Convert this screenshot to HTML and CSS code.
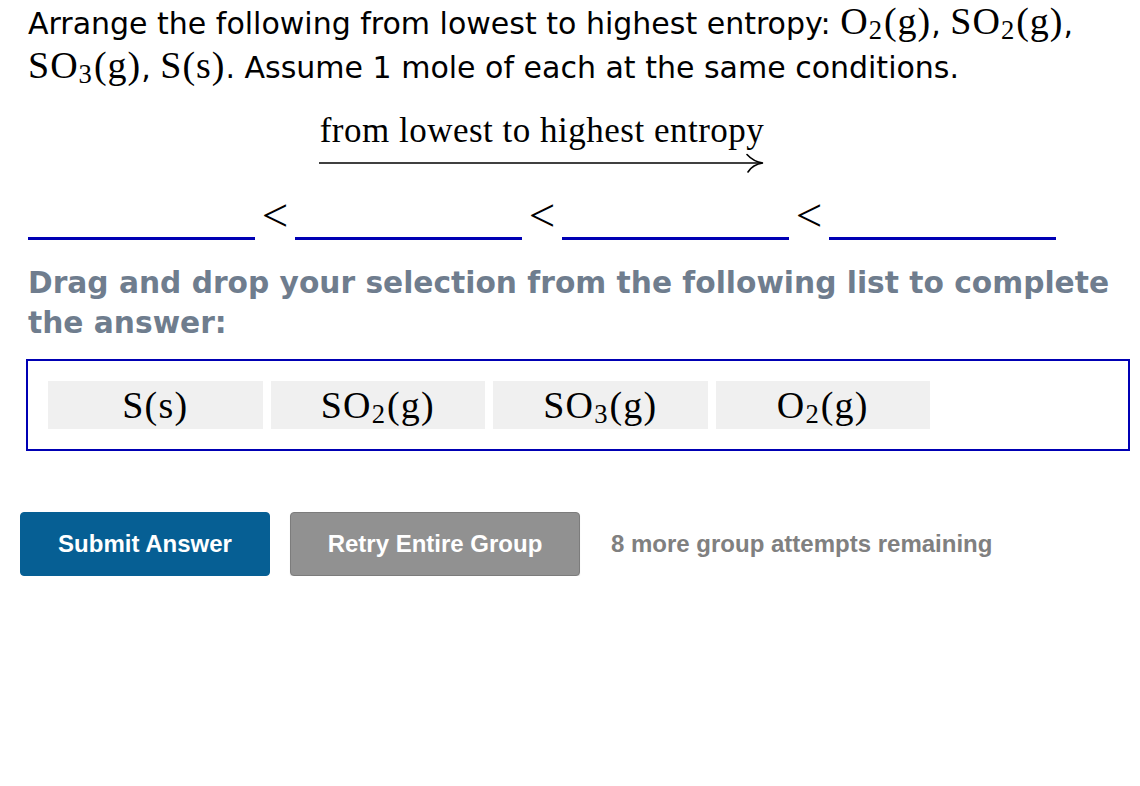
FILE: index.html
```html
<!DOCTYPE html>
<html lang="en">
<head>
<meta charset="utf-8">
<title>Entropy ordering</title>
<link rel="stylesheet" href="styles.css">
</head>
<body>
<main class="page">
  <p class="question">Arrange the following from lowest to highest entropy: <span class="m">O<sub>2</sub>(g)</span>, <span class="m">SO<sub>2</sub>(g)</span>, <span class="m">SO<sub>3</sub>(g)</span>, <span class="m">S(s)</span>. Assume 1 mole of each at the same conditions.</p>

  <div class="order">
    <div class="direction">
      <div class="direction-label">from lowest to highest entropy</div>
      <svg class="direction-arrow" width="446" height="20" viewBox="0 0 446 20">
        <path d="M0 10 H443" stroke="#000" stroke-width="1.6" fill="none"/>
        <path d="M428 1.5 C432 6 437 9 444 10 C437 11 432 14 429 19" stroke="#000" stroke-width="1.6" fill="none" stroke-linecap="round"/>
      </svg>
    </div>
    <div class="blanks">
      <span class="blank"></span><span class="sep">&lt;</span><span class="blank"></span><span class="sep">&lt;</span><span class="blank"></span><span class="sep">&lt;</span><span class="blank"></span>
    </div>
  </div>

  <p class="instruct">Drag and drop your selection from the following list to complete the answer:</p>

  <div class="bank">
    <div class="chip"><span class="m">S(s)</span></div>
    <div class="chip"><span class="m">SO<sub>2</sub>(g)</span></div>
    <div class="chip"><span class="m">SO<sub>3</sub>(g)</span></div>
    <div class="chip"><span class="m">O<sub>2</sub>(g)</span></div>
  </div>
</main>

<div class="actions">
  <button class="btn btn-submit" type="button">Submit Answer</button>
  <button class="btn btn-retry" type="button">Retry Entire Group</button>
  <span class="attempts">8 more group attempts remaining</span>
</div>
</body>
</html>
```

FILE: styles.css
```css
html, body {
  margin: 0;
  padding: 0;
  background: #ffffff;
}

body {
  font-family: "DejaVu Sans", Verdana, sans-serif;
  color: #000000;
}

.page {
  padding: 2px 10px 0 28px;
}

.question {
  margin: 0;
  font-size: 30px;
  line-height: 44px;
}

.m {
  font-family: "Liberation Serif", "Times New Roman", serif;
  font-size: 38px;
  letter-spacing: 1px;
}

.question .m {
  line-height: 1;
}

.m sub {
  font-size: 0.7em;
  line-height: 0;
  vertical-align: -0.2em;
  letter-spacing: 0;
  margin-right: 2px;
}

.order {
  width: 1028px;
}

.direction {
  display: flex;
  flex-direction: column;
  align-items: center;
  margin-top: 21px;
}

.direction-label {
  font-family: "Liberation Serif", "Times New Roman", serif;
  font-size: 35px;
  line-height: 40px;
  letter-spacing: 0.5px;
  width: 446px;
  text-align: center;
}

.direction-arrow {
  display: block;
  margin-top: 2px;
}

.blanks {
  display: flex;
  align-items: flex-end;
  margin-top: 20px;
}

.blank {
  width: 227px;
  height: 3px;
  background: #0000b4;
}

.sep {
  width: 40px;
  text-align: center;
  font-family: "Liberation Serif", "Times New Roman", serif;
  font-size: 47px;
  line-height: 44px;
  padding-bottom: 3px;
}

.instruct {
  margin: 23px 0 0 0;
  font-size: 29.7px;
  line-height: 40px;
  font-weight: bold;
  color: #6f7d8e;
}

.bank {
  display: flex;
  gap: 8px;
  margin: 16px 0 0 -2px;
  padding: 20px;
  border: 2px solid #0000b4;
}

.chip {
  width: 214.5px;
  height: 48px;
  background: #f0f0f0;
  display: flex;
  align-items: center;
  justify-content: center;
  line-height: 48px;
}

.chip .m {
  font-size: 38px;
  letter-spacing: 1.2px;
}

.actions {
  display: flex;
  align-items: center;
  padding-left: 20px;
  margin-top: 61px;
  font-family: "Liberation Sans", Arial, sans-serif;
}

.btn {
  box-sizing: border-box;
  height: 64px;
  padding: 0;
  border-radius: 4px;
  font-family: "Liberation Sans", Arial, sans-serif;
  font-size: 24px;
  font-weight: bold;
  color: #ffffff;
  white-space: nowrap;
  text-align: center;
  cursor: pointer;
}

.btn-submit {
  width: 250px;
  background: #065f94;
  border: 1px solid #065f94;
}

.btn-retry {
  width: 290px;
  margin-left: 20px;
  background: #919191;
  border: 1px solid #7c7c7c;
  box-shadow: 0 1px 1px rgba(0, 0, 0, 0.15);
}

.attempts {
  margin-left: 31px;
  font-size: 24px;
  font-weight: bold;
  color: #808080;
}
```
